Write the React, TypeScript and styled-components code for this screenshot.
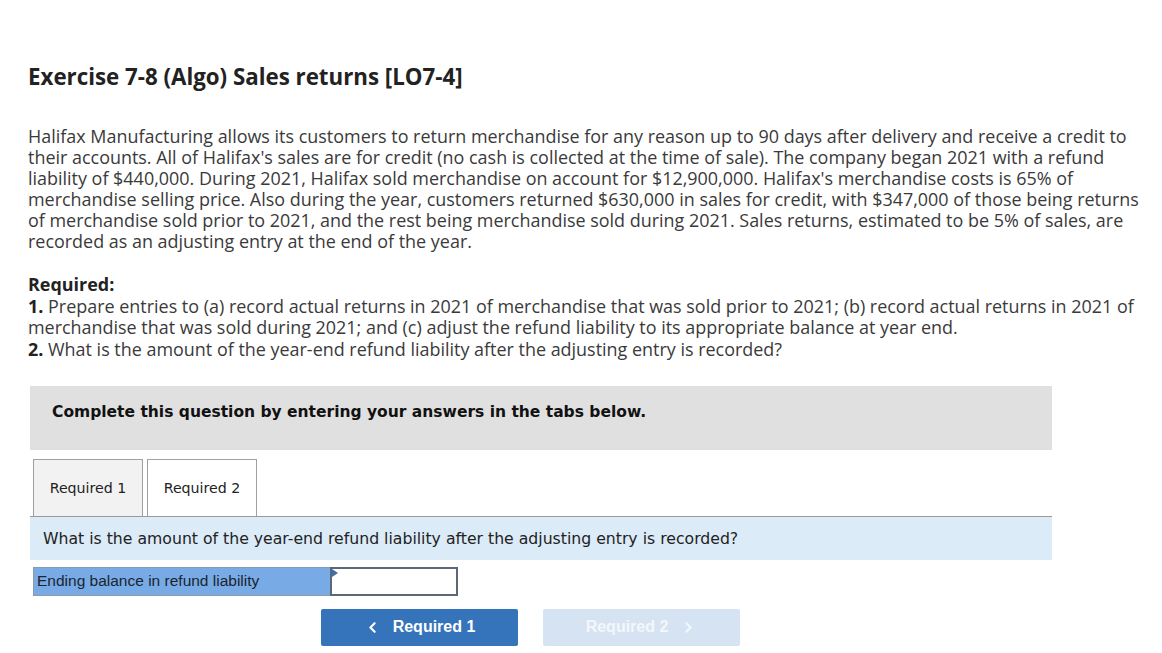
import { createGlobalStyle, styled } from 'styled-components'
import { ChevronLeft, ChevronRight } from 'lucide-react'

const GlobalStyle = createGlobalStyle`
	html, body {
		margin: 0;
		padding: 0;
		background: #fff;
	}
	* {
		box-sizing: border-box;
	}
`

const App = () => {
	return (
		<>
			<GlobalStyle />
			<Page>
				<Title>Exercise 7-8 (Algo) Sales returns [LO7-4]</Title>

				<Paragraph>
					Halifax Manufacturing allows its customers to return merchandise for any reason up to 90 days after delivery and receive a credit to
					<br />
					their accounts. All of Halifax's sales are for credit (no cash is collected at the time of sale). The company began 2021 with a refund
					<br />
					liability of $440,000. During 2021, Halifax sold merchandise on account for $12,900,000. Halifax's merchandise costs is 65% of
					<br />
					merchandise selling price. Also during the year, customers returned $630,000 in sales for credit, with $347,000 of those being returns
					<br />
					of merchandise sold prior to 2021, and the rest being merchandise sold during 2021. Sales returns, estimated to be 5% of sales, are
					<br />
					recorded as an adjusting entry at the end of the year.
				</Paragraph>

				<Required>
					<strong>Required:</strong>
					<br />
					<strong>1.</strong> Prepare entries to (a) record actual returns in 2021 of merchandise that was sold prior to 2021; (b) record actual returns in 2021 of
					<br />
					merchandise that was sold during 2021; and (c) adjust the refund liability to its appropriate balance at year end.
					<br />
					<strong>2.</strong> What is the amount of the year-end refund liability after the adjusting entry is recorded?
				</Required>

				<Workspace>
					<Instruction>Complete this question by entering your answers in the tabs below.</Instruction>

					<TabStrip>
						<Tab>Required 1</Tab>
						<Tab $active>Required 2</Tab>
					</TabStrip>

					<QuestionBar>What is the amount of the year-end refund liability after the adjusting entry is recorded?</QuestionBar>

					<AnswerRow>
						<AnswerLabel>Ending balance in refund liability</AnswerLabel>
						<AnswerCell>
							<Marker />
							<AnswerInput type="text" />
						</AnswerCell>
					</AnswerRow>

					<NavRow>
						<NavButton>
							<ChevronLeft size={17} strokeWidth={3} />
							<span>Required 1</span>
						</NavButton>
						<NavButton $disabled>
							<span>Required 2</span>
							<ChevronRight size={17} strokeWidth={3} />
						</NavButton>
					</NavRow>
				</Workspace>
			</Page>
		</>
	)
}

const Page = styled.div`
	padding: 64px 0 0 28px;
	font-family: 'Open Sans', Lato, sans-serif;
	color: #3a3a3a;
`
const Title = styled.h1`
	margin: 0;
	font-size: 22.3px;
	line-height: 26px;
	font-weight: 700;
	color: #222;
`
const Paragraph = styled.p`
	margin: 36px 0 0;
	font-size: 17.95px;
	line-height: 21px;
	white-space: nowrap;
`
const Required = styled.p`
	margin: 22px 0 0;
	font-size: 17.95px;
	line-height: 21.7px;
	white-space: nowrap;

	strong {
		font-weight: 700;
		color: #222;
	}
`
const Workspace = styled.div`
	width: 1022px;
	margin: 25px 0 0 2px;
`
const Instruction = styled.div`
	height: 64px;
	padding: 16px 0 0 22px;
	background: #e0e0e0;
	font-family: Verdana, 'DejaVu Sans', sans-serif;
	font-size: 15.5px;
	line-height: 20px;
	font-weight: 700;
	color: #111;
`
const TabStrip = styled.div`
	display: flex;
	gap: 4px;
	margin-top: 9px;
	padding-left: 3px;
`
const Tab = styled.div<{ $active?: boolean }>`
	width: 110px;
	height: 57px;
	display: flex;
	align-items: center;
	justify-content: center;
	border: 1px solid #a0a0a0;
	border-bottom: none;
	background: ${(p) => (p.$active ? '#fff' : '#f2f2f2')};
	margin-bottom: ${(p) => (p.$active ? '-1px' : '0')};
	position: relative;
	z-index: 1;
	font-family: Verdana, 'DejaVu Sans', sans-serif;
	font-size: 14.2px;
	color: #222;
`
const QuestionBar = styled.div`
	height: 44px;
	padding: 0 13px;
	display: flex;
	align-items: center;
	background: #dcebf8;
	border-top: 1px solid #999;
	font-family: Verdana, 'DejaVu Sans', sans-serif;
	font-size: 15.7px;
	color: #222;
`
const AnswerRow = styled.div`
	display: flex;
	margin: 7px 0 0 3px;
	height: 29px;
`
const AnswerLabel = styled.div`
	width: 297px;
	display: flex;
	align-items: center;
	padding-left: 3px;
	background: #78abe5;
	border: 1px solid #8a9bb0;
	border-right: none;
	font-family: Arial, 'Liberation Sans', sans-serif;
	font-size: 15.5px;
	color: #1b2430;
`
const AnswerCell = styled.div`
	position: relative;
	width: 128px;
`
const Marker = styled.span`
	position: absolute;
	left: 2px;
	top: 2px;
	width: 0;
	height: 0;
	border-top: 4px solid transparent;
	border-bottom: 4px solid transparent;
	border-left: 6px solid #3f6fa6;
`
const AnswerInput = styled.input`
	width: 100%;
	height: 100%;
	border: 2px solid #5b6877;
	background: #fff;
	outline: none;
	padding: 0 6px;
`
const NavRow = styled.div`
	display: flex;
	gap: 25px;
	margin-top: 13px;
	padding-left: 291px;
`
const NavButton = styled.button<{ $disabled?: boolean }>`
	width: 197px;
	height: 37px;
	display: flex;
	align-items: center;
	justify-content: center;
	gap: 12px;
	border: none;
	border-radius: 2px;
	background: ${(p) => (p.$disabled ? '#d6e3f3' : '#3574ba')};
	color: ${(p) => (p.$disabled ? '#f3f7fc' : '#fff')};
	font-family: Arial, 'Liberation Sans', sans-serif;
	font-size: 16px;
	font-weight: 700;
	cursor: ${(p) => (p.$disabled ? 'default' : 'pointer')};
`

export default App
